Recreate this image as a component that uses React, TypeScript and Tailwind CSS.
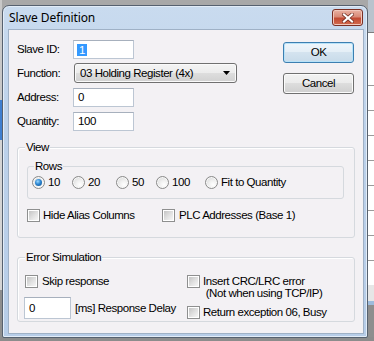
import React from "react";

function Radio({ checked }: { checked?: boolean }) {
  return (
    <span className="flex h-[13px] w-[13px] shrink-0 items-center justify-center rounded-full border border-[#8a8a8a] bg-[radial-gradient(circle_at_65%_70%,#ffffff_0%,#f2f2f2_35%,#d2d2d2_100%)] shadow-[inset_0_0_0_1px_#f8f8f8]">
      {checked && (
        <span className="h-[7px] w-[7px] rounded-full bg-[radial-gradient(circle_at_40%_35%,#9ad8ff_0%,#2d86d2_45%,#0b4a88_100%)]" />
      )}
    </span>
  );
}

function Check() {
  return (
    <span className="flex h-[13px] w-[13px] shrink-0 border border-[#8e8f8f] bg-white p-px">
      <span className="block h-full w-full bg-[linear-gradient(135deg,#c4c4c4_0%,#e2e2e2_55%,#f6f6f6_100%)]" />
    </span>
  );
}

function Input({ children, w, h }: { children: React.ReactNode; w: string; h: string }) {
  return (
    <div
      className={`${w} ${h} flex items-center border border-[#bcc6d3] border-t-[#a7b0bd] bg-white pl-[4px]`}
    >
      {children}
    </div>
  );
}

function Group({
  label,
  className,
  children,
}: {
  label: string;
  className: string;
  children: React.ReactNode;
}) {
  return (
    <div className={`relative rounded-[3px] border border-[#d5d9de] shadow-[inset_1px_1px_0_#ffffff] ${className}`}>
      <span className="absolute left-[7px] top-[-7px] bg-[#f3f1f4] px-px leading-[12px]">{label}</span>
      {children}
    </div>
  );
}

function Button({ children, primary }: { children: React.ReactNode; primary?: boolean }) {
  return (
    <div
      className={`flex h-[21px] w-[71px] items-center justify-center rounded-[3px] border ${
        primary
          ? "border-[#3c7fb1] bg-[linear-gradient(to_bottom,#eef6fb_0%,#e4eef6_50%,#d4e3ef_50%,#c8dbea_100%)] shadow-[inset_0_0_0_1px_#b8e2f8]"
          : "border-[#707070] bg-[linear-gradient(to_bottom,#f2f2f2_0%,#ebebeb_50%,#dddddd_50%,#cfcfcf_100%)] shadow-[inset_0_0_0_1px_#fbfbfb]"
      }`}
    >
      {children}
    </div>
  );
}

export default function App() {
  return (
    <div className="relative h-[341px] w-[374px] overflow-hidden bg-[#a8a8a8] font-['Liberation_Sans',Arial,sans-serif] text-[11.5px] leading-[13px] tracking-[-0.45px] text-black">
      {/* desktop backdrop */}
      <div className="absolute left-[368px] top-0 flex h-[341px] w-[6px] flex-col">
        <div className="h-[32px] bg-[#b9c3cd]" />
        <div className="h-[53px] border-t border-[#7d7d7d] bg-white" />
        {[0, 1, 2, 3, 4, 5, 6, 7].map((i) => (
          <div key={i} className="h-[25px] border-t border-[#9a9a9a] bg-white" />
        ))}
        <div className="h-[16px] bg-[#e6e6e6]" />
        <div className="h-[4px] bg-[#9dbbdc]" />
        <div className="flex-1 bg-[#8e8e8e]" />
      </div>
      <div className="absolute left-0 top-0 flex h-[341px] w-[2px] flex-col">
        <div className="h-[100px] bg-[#c8c8c8]" />
        <div className="h-[40px] bg-[#3f7fd0]" />
        <div className="h-[150px] bg-[#d4d4d4]" />
        <div className="flex-1 bg-[#8e8e8e]" />
      </div>
      <div className="absolute bottom-0 left-0 h-[4px] w-[374px] bg-[#8c8c8c]" />

      {/* window */}
      <div className="relative pl-[2px] pt-[5px]">
        <div className="flex h-[333px] w-[366px] flex-col rounded-t-[7px] rounded-b-[2px] border border-[#56616f] bg-[linear-gradient(to_bottom,#c9dbef_0%,#bcd1ea_40%,#b7cde8_100%)] shadow-[inset_0_0_0_1px_#e2ecf7]">
          {/* title bar */}
          <div className="flex h-[23px] items-center pl-[6px] pr-[4px]">
            <span className="font-['Noto_Sans',sans-serif] text-[12px] leading-[16px] tracking-[-0.1px] text-black">
              Slave Definition
            </span>
            <div className="ml-auto flex h-[17px] w-[31px] items-center justify-center rounded-[3px] border border-[#7a2f24] bg-[linear-gradient(to_bottom,#eab2a3_0%,#d98a77_45%,#c24a33_55%,#d26b4e_100%)] shadow-[inset_0_0_0_1px_#f1c7bb]">
              <svg width="12" height="10" viewBox="0 0 12 10">
                <path d="M2 1.5 L10 8.5 M10 1.5 L2 8.5" stroke="#6e2a1e" strokeWidth="3.6" strokeLinecap="square" />
                <path d="M2 1.5 L10 8.5 M10 1.5 L2 8.5" stroke="#ffffff" strokeWidth="2.2" strokeLinecap="square" />
              </svg>
            </div>
          </div>

          {/* client */}
          <div className="mb-[3px] ml-[5px] mr-[3px] h-[305px] border border-[#9fb1c6] bg-[#f3f1f4]">
            <div className="flex pl-[8px] pr-[9px] pt-[10px]">
              <div className="flex flex-col">
                <div className="mb-[4px] flex h-[19px] items-center">
                  <span className="w-[56px]">Slave ID:</span>
                  <div className="flex h-[19px] w-[61px] items-center border border-[#bcc6d3] border-t-[#a7b0bd] bg-white pl-[3px]">
                    <span className="bg-[#3399ff] px-[2px] leading-[12px] text-white">1</span>
                  </div>
                </div>
                <div className="mb-[5px] flex h-[20px] items-center">
                  <span className="w-[57px]">Function:</span>
                  <div className="flex h-[20px] w-[163px] items-center rounded-[3px] border border-[#707070] bg-[linear-gradient(to_bottom,#f4f4f4_0%,#ececec_50%,#dedede_50%,#d1d1d1_100%)] pl-[5px] pr-[6px] shadow-[inset_0_0_0_1px_#fafafa]">
                    <span>03 Holding Register (4x)</span>
                    <svg className="ml-auto" width="7" height="4" viewBox="0 0 7 4">
                      <path d="M0 0 H7 L3.5 4 Z" fill="#000" />
                    </svg>
                  </div>
                </div>
                <div className="mb-[5px] flex h-[19px] items-center">
                  <span className="w-[56px]">Address:</span>
                  <Input w="w-[61px]" h="h-[19px]">0</Input>
                </div>
                <div className="flex h-[19px] items-center">
                  <span className="w-[56px]">Quantity:</span>
                  <Input w="w-[61px]" h="h-[19px]">100</Input>
                </div>
              </div>
              <div className="ml-auto mt-[2px] flex flex-col gap-[10px]">
                <Button primary>OK</Button>
                <Button>Cancel</Button>
              </div>
            </div>

            <Group label="View" className="ml-[8px] mt-[16px] h-[91px] w-[338px]">
              <div className="relative ml-[9px] mt-[18px] h-[33px] w-[317px] rounded-[3px] border border-[#d5d9de]">
                <span className="absolute left-[6px] top-[-7px] bg-[#f3f1f4] px-px leading-[12px]">Rows</span>
                <div className="flex items-center pl-[4px] pt-[9px]">
                  {[
                    { l: "10", w: "w-[40px]", c: true },
                    { l: "20", w: "w-[44px]" },
                    { l: "50", w: "w-[40px]" },
                    { l: "100", w: "w-[49px]" },
                    { l: "Fit to Quantity", w: "" },
                  ].map((r) => (
                    <div key={r.l} className={`flex items-center gap-[3px] ${r.w}`}>
                      <Radio checked={r.c} />
                      <span>{r.l}</span>
                    </div>
                  ))}
                </div>
              </div>
              <div className="ml-[9px] mt-[10px] flex items-center">
                <div className="flex w-[135px] items-center gap-[3px]">
                  <Check />
                  <span>Hide Alias Columns</span>
                </div>
                <div className="flex items-center gap-[4px]">
                  <Check />
                  <span>PLC Addresses (Base 1)</span>
                </div>
              </div>
            </Group>

            <Group label="Error Simulation" className="ml-[8px] mt-[19px] h-[65px] w-[338px]">
              <div className="flex">
                <div className="ml-[6px] flex w-[163px] flex-col">
                  <div className="ml-px mt-[17px] flex items-center gap-[4px]">
                    <Check />
                    <span>Skip response</span>
                  </div>
                  <div className="mt-[9px] flex items-center gap-[4px]">
                    <Input w="w-[47px]" h="h-[22px]">0</Input>
                    <span>[ms] Response Delay</span>
                  </div>
                </div>
                <div className="flex flex-col">
                  <div className="mt-[17px] flex items-start gap-[3px]">
                    <Check />
                    <span className="leading-[12px]">
                      Insert CRC/LRC error
                      <br />
                      &nbsp;(Not when using TCP/IP)
                    </span>
                  </div>
                  <div className="mt-[7px] flex items-center gap-[3px]">
                    <Check />
                    <span>Return exception 06, Busy</span>
                  </div>
                </div>
              </div>
            </Group>
          </div>
        </div>
      </div>
    </div>
  );
}
